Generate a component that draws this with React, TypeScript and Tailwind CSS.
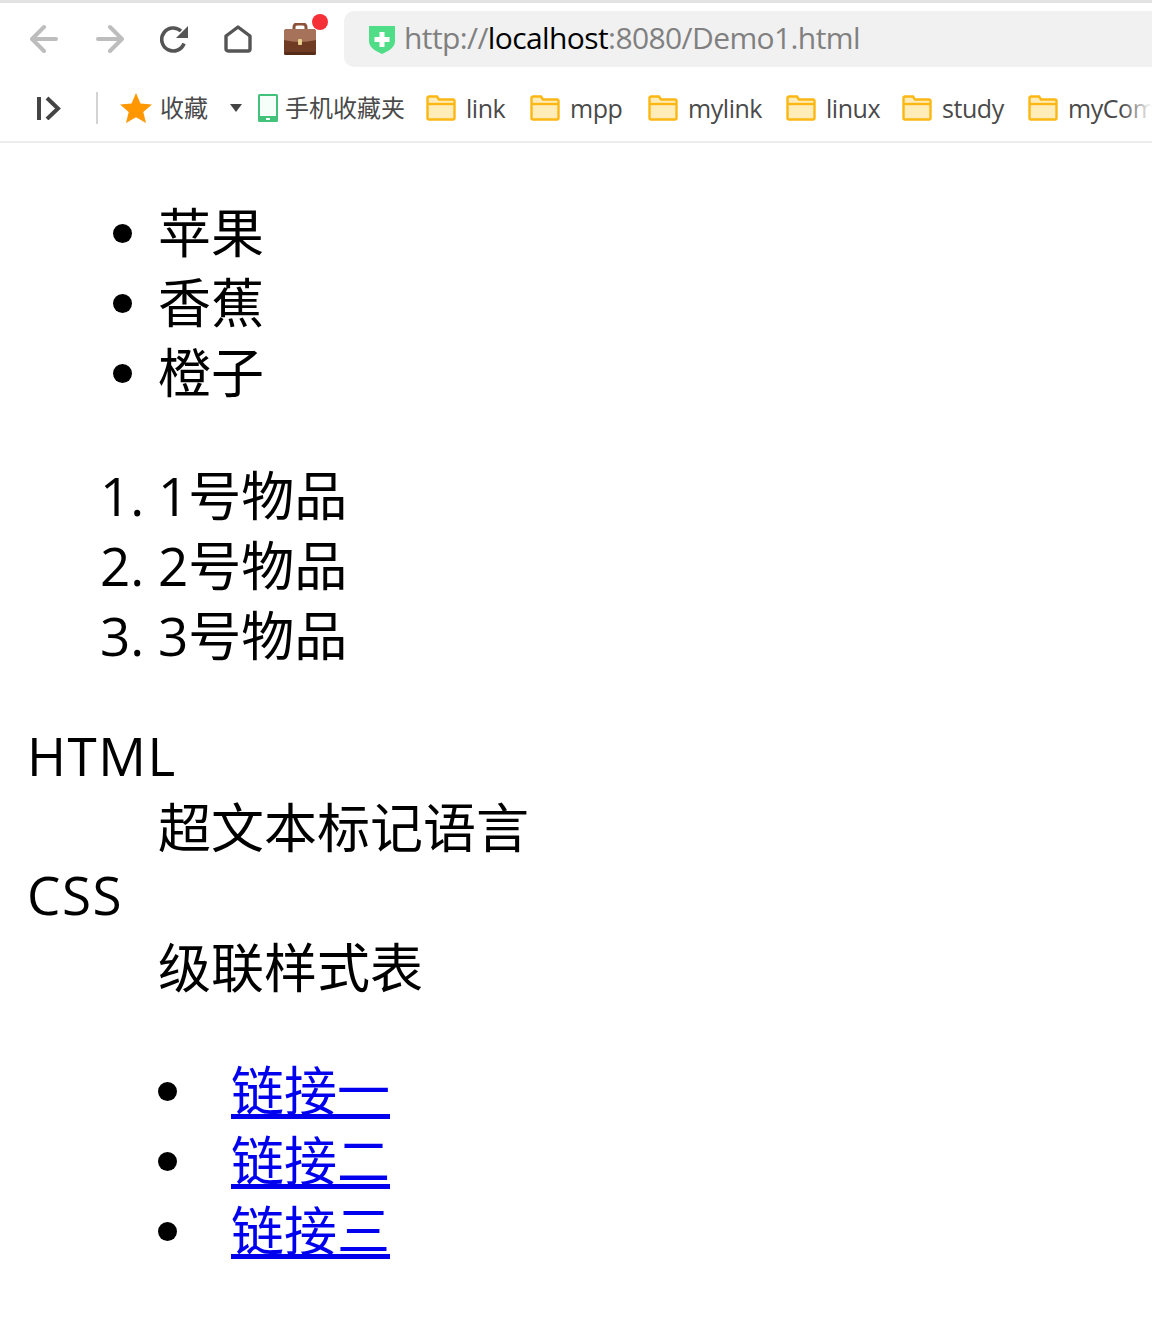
import React from 'react';

const cjk = { fontFamily: '"Open Sans", "Noto Sans CJK SC", sans-serif' };

const FolderIcon = () => (
  <svg width="30" height="26" viewBox="0 0 30 26" className="shrink-0">
    <path d="M1.5 3 A1.5 1.5 0 0 1 3 1.5 H11 L13 4.5 H27 A1.5 1.5 0 0 1 28.5 6 V23 A1.5 1.5 0 0 1 27 24.5 H3 A1.5 1.5 0 0 1 1.5 23 Z" fill="#ffecb8" stroke="#fbb714" strokeWidth="2.4" />
    <path d="M2 9 H28" stroke="#fbb714" strokeWidth="2.4" />
  </svg>
);

const Folder = ({ name, width }: { name: string; width: string }) => (
  <div className={`flex items-center gap-[10px] shrink-0 ${width}`}>
    <FolderIcon />
    <span className="text-[25px] leading-none text-[#4a4a4a] tracking-[-0.45px] whitespace-nowrap">{name}</span>
  </div>
);

const folders = [
  { name: 'link', width: 'w-[80px]' },
  { name: 'mpp', width: 'w-[94px]' },
  { name: 'mylink', width: 'w-[114px]' },
  { name: 'linux', width: 'w-[92px]' },
  { name: 'study', width: 'w-[102px]' },
  { name: 'myCom', width: 'w-[120px]' },
];
const fruits = ['苹果', '香蕉', '橙子'];
const goods = ['1号物品', '2号物品', '3号物品'];
const links = ['链接一', '链接二', '链接三'];

export default function App() {
  return (
    <div className="bg-white text-black min-h-[1321px] overflow-hidden" style={cjk}>
      <header className="border-t-[3px] border-[#e2e2e2]">
        <div className="flex items-center h-[64px] pt-[8px]">
          <div className="flex items-center pl-[30px] shrink-0">
            <svg width="28" height="30" viewBox="0 0 28 30" fill="none" stroke="#bdbdbd" strokeWidth="4" strokeLinecap="round" strokeLinejoin="round">
              <path d="M26 15 H3 M14 3 L2 15 L14 27" />
            </svg>
            <svg width="28" height="30" viewBox="0 0 28 30" fill="none" stroke="#bdbdbd" strokeWidth="4" strokeLinecap="round" strokeLinejoin="round" className="ml-[38px]">
              <path d="M2 15 H25 M14 3 L26 15 L14 27" />
            </svg>
            <svg width="28" height="28" viewBox="0 0 28 28" fill="none" className="ml-[36px]">
              <path d="M24 18.5 A11.5 11.5 0 1 1 21 6" stroke="#555" strokeWidth="3.6" />
              <path d="M28 1 V13 H16 Z" fill="#555" />
            </svg>
            <svg width="28" height="28" viewBox="0 0 28 28" fill="none" className="ml-[36px]">
              <path d="M2 11 L14 2 L26 11 V24 A2 2 0 0 1 24 26 H4 A2 2 0 0 1 2 24 Z" stroke="#555" strokeWidth="3.4" strokeLinejoin="round" />
            </svg>
          </div>
          <div className="relative ml-[32px] w-[32px] h-[32px] shrink-0">
            <svg width="32" height="32" viewBox="0 0 32 32">
              <path d="M10 7 V4 A3 3 0 0 1 13 1 H19 A3 3 0 0 1 22 4 V7" fill="none" stroke="#8a5238" strokeWidth="3" />
              <rect x="0" y="6" width="32" height="26" rx="3" fill="#6f3b22" />
              <path d="M0 9 A3 3 0 0 1 3 6 H29 A3 3 0 0 1 32 9 V17 Q16 21 0 17 Z" fill="#a67259" />
              <rect x="14" y="16" width="4" height="6" rx="1" fill="#e8cf8e" />
              <rect x="0" y="29" width="32" height="3" rx="1.5" fill="#562c18" />
            </svg>
            <span className="absolute -top-[9px] -right-[12px] w-[16px] h-[16px] rounded-full bg-[#f53036]" />
          </div>
          <div className="flex items-center flex-1 h-[56px] ml-[28px] bg-[#f1f1f1] rounded-l-[10px] pl-[24px]">
            <svg width="28" height="30" viewBox="0 0 28 30" className="shrink-0">
              <path d="M1 2 H27 V17 C27 23 21 27 14 30 C7 27 1 23 1 17 Z" fill="#4fdd87" />
              <path d="M11.5 8 H16.5 V13 H21.5 V18 H16.5 V23 H11.5 V18 H6.5 V13 H11.5 Z" fill="#fff" />
            </svg>
            <div className="ml-[8px] text-[30px] leading-none text-[#808080] tracking-[-0.6px] whitespace-nowrap -translate-y-px">
              http://<span className="text-black">localhost</span>:8080/Demo1.html
            </div>
          </div>
        </div>
        <div className="relative flex items-center h-[76px] pt-[8px] border-b-2 border-[#ececec] overflow-hidden">
          <div className="flex items-center pl-[37px] shrink-0">
            <svg width="24" height="24" viewBox="0 0 24 24" fill="none">
              <rect x="0" y="1" width="4" height="23" fill="#444" />
              <path d="M10 2 L21 12.5 L10 23" stroke="#444" strokeWidth="4" />
            </svg>
            <div className="ml-[35px] w-[2px] h-[32px] bg-[#d4d4d4]" />
            <svg width="32" height="32" viewBox="0 0 32 32" className="ml-[22px]">
              <path d="M16 1 L20.5 11.5 L32 12.5 L23.3 20 L26 31 L16 25.2 L6 31 L8.7 20 L0 12.5 L11.5 11.5 Z" fill="#ff9800" />
            </svg>
            <span className="ml-[8px] text-[24px] leading-none text-[#4a4a4a]">收藏</span>
            <svg width="12" height="8" viewBox="0 0 12 8" className="ml-[22px]">
              <path d="M0 0 H12 L6 8 Z" fill="#444" />
            </svg>
            <svg width="20" height="28" viewBox="0 0 20 28" className="ml-[16px]">
              <rect x="0" y="0" width="20" height="28" rx="1.5" fill="#43c27a" />
              <rect x="2" y="2" width="16" height="20" fill="#f6fff9" />
              <rect x="8" y="24" width="4" height="2" fill="#f6fff9" />
            </svg>
            <span className="ml-[7px] text-[24px] leading-none text-[#4a4a4a]">手机收藏夹</span>
          </div>
          <div className="flex items-center gap-[24px] ml-[21px]">
            {folders.map((f) => (
              <Folder key={f.name} name={f.name} width={f.width} />
            ))}
          </div>
          <div className="absolute right-0 top-0 bottom-0 w-[30px] bg-gradient-to-r from-transparent to-white" />
        </div>
      </header>

      <main className="pl-[27px] pt-[55px] text-[53px] leading-[70px]">
        <ul className="list-disc pl-[131px]">
          {fruits.map((f) => (
            <li key={f}>{f}</li>
          ))}
        </ul>
        <ol className="list-decimal pl-[131px] mt-[53px]">
          {goods.map((g) => (
            <li key={g}>{g}</li>
          ))}
        </ol>
        <dl className="mt-[50px]">
          <dt className="tracking-[1.5px]">HTML</dt>
          <dd className="ml-[131px] h-[69px] pt-[2px]">超文本标记语言</dd>
          <dt className="tracking-[1.5px]">CSS</dt>
          <dd className="ml-[131px] h-[71px] pt-[3px]">级联样式表</dd>
        </dl>
        <ul className="list-disc list-inside pl-[131px] mt-[55px]">
          {links.map((l) => (
            <li key={l}>
              <a href="#" className="text-[#0000ee] underline">{l}</a>
            </li>
          ))}
        </ul>
      </main>
    </div>
  );
}
